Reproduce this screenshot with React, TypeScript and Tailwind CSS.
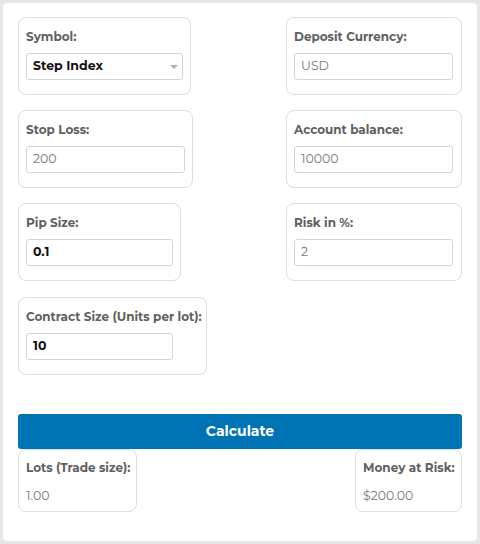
const font = { fontFamily: "Montserrat, Inter, 'Noto Sans', sans-serif" }

type FieldProps = {
  label: string
  value: string
  boxWidth: string
  inputWidth: string
  strong?: boolean
  select?: boolean
}

function Field({ label, value, boxWidth, inputWidth, strong, select }: FieldProps) {
  return (
    <div className={`${boxWidth} h-[78px] rounded-lg border border-[#dedede] bg-white px-[7px] pt-[11px]`}>
      <div className="mb-[8px] text-[12px] leading-[16px] font-bold whitespace-nowrap text-[#5f5f5f]">{label}</div>
      <div
        className={`${inputWidth} relative flex h-[27px] items-center rounded-[3px] border border-[#d4d4d4] bg-white px-[6px] text-[12.5px] ${
          strong ? "font-bold text-[#111]" : "text-[#7a7a7a]"
        }`}
      >
        {value}
        {select && (
          <span className="absolute right-[4px] top-[11px] h-0 w-0 border-x-[4px] border-t-[4px] border-x-transparent border-t-[#b0b0b0]" />
        )}
      </div>
    </div>
  )
}

function Result({ label, value, width }: { label: string; value: string; width: string }) {
  return (
    <div className={`${width} h-[63px] rounded-lg border border-[#dedede] bg-white px-[7px] pt-[10px]`}>
      <div className="text-[12px] leading-[16px] font-bold whitespace-nowrap text-[#5f5f5f]">{label}</div>
      <div className="mt-[12px] text-[12.5px] leading-[16px] whitespace-nowrap text-[#7a7a7a]">{value}</div>
    </div>
  )
}

export default function App() {
  return (
    <div className="min-h-[544px] w-[480px] bg-[#e6e6e6] p-[3px]" style={font}>
      <div className="h-[538px] w-[474px] rounded-[4px] bg-white px-[15px] pt-[14px]">
        <div className="flex flex-col gap-[15px]">
          <div className="flex justify-between">
            <Field label="Symbol:" value="Step Index" boxWidth="w-[173px]" inputWidth="w-[157px]" strong select />
            <Field label="Deposit Currency:" value="USD" boxWidth="w-[176px]" inputWidth="w-[159px]" />
          </div>
          <div className="flex justify-between">
            <Field label="Stop Loss:" value="200" boxWidth="w-[175px]" inputWidth="w-[159px]" />
            <Field label="Account balance:" value="10000" boxWidth="w-[176px]" inputWidth="w-[159px]" />
          </div>
          <div className="flex justify-between">
            <Field label="Pip Size:" value="0.1" boxWidth="w-[163px]" inputWidth="w-[147px]" strong />
            <Field label="Risk in %:" value="2" boxWidth="w-[176px]" inputWidth="w-[159px]" />
          </div>
          <div className="mt-px flex">
            <Field
              label="Contract Size (Units per lot):"
              value="10"
              boxWidth="w-[189px]"
              inputWidth="w-[147px]"
              strong
            />
          </div>
        </div>

        <button className="mt-[39px] flex h-[35px] w-[444px] items-center justify-center rounded-[3px] bg-[#0073b5] text-[14px] font-bold text-white">
          Calculate
        </button>

        <div className="flex justify-between">
          <Result label="Lots (Trade size):" value="1.00" width="w-[119px]" />
          <Result label="Money at Risk:" value="$200.00" width="w-[107px]" />
        </div>
      </div>
    </div>
  )
}
